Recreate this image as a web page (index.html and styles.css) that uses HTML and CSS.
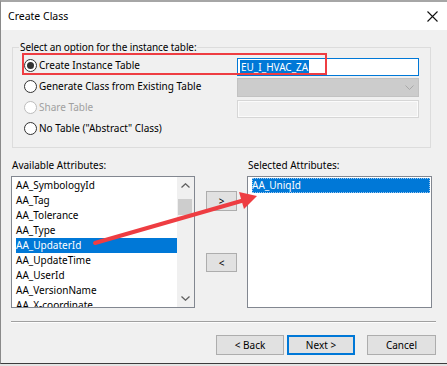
FILE: index.html
```html
<!DOCTYPE html>
<html>
<head>
<meta charset="utf-8">
<link rel="stylesheet" href="styles.css">
</head>
<body>
<div class="window">
  <div class="titlebar">
    <span class="title">Create Class</span>
    <svg class="close" width="11" height="11" viewBox="0 0 11 11"><path d="M0.5 0.5 L10.5 10.5 M10.5 0.5 L0.5 10.5" stroke="#111" stroke-width="1.1" fill="none"/></svg>
  </div>
  <div class="content">
    <fieldset class="group">
      <legend>Select an option for the instance table:</legend>
      <div class="options">
        <label class="opt"><span class="radio checked"></span>Create Instance Table</label>
        <div class="textbox focused"><span class="seltext">EU_I_HVAC_ZA</span></div>
        <label class="opt"><span class="radio"></span>Generate Class from Existing Table</label>
        <div class="combo"><svg width="9" height="5" viewBox="0 0 9 5"><path d="M0.5 0.5 L4.5 4.5 L8.5 0.5" stroke="#a8a8a8" fill="none"/></svg></div>
        <label class="opt disabled"><span class="radio"></span>Share Table</label>
        <div class="textbox disabled"></div>
        <label class="opt"><span class="radio"></span>No Table ("Abstract" Class)</label>
      </div>
    </fieldset>
    <div class="lists">
      <div class="col">
        <div class="lbl">Available Attributes:</div>
        <div class="listbox">
          <div class="items">
            <div class="item">AA_SymbologyId</div>
            <div class="item">AA_Tag</div>
            <div class="item">AA_Tolerance</div>
            <div class="item">AA_Type</div>
            <div class="item selected">AA_UpdaterId</div>
            <div class="item">AA_UpdateTime</div>
            <div class="item">AA_UserId</div>
            <div class="item">AA_VersionName</div>
            <div class="item">AA_X-coordinate</div>
          </div>
          <div class="scrollbar">
            <div class="sb-btn"><svg width="9" height="5" viewBox="0 0 9 5"><path d="M0.5 4.5 L4.5 0.8 L8.5 4.5" stroke="#606060" stroke-width="1.3" fill="none"/></svg></div>
            <div class="sb-track"><div class="sb-thumb"></div></div>
            <div class="sb-btn"><svg width="9" height="5" viewBox="0 0 9 5"><path d="M0.5 0.5 L4.5 4.2 L8.5 0.5" stroke="#606060" stroke-width="1.3" fill="none"/></svg></div>
          </div>
        </div>
      </div>
      <div class="mid">
        <button class="btn small add">&gt;</button>
        <button class="btn small remove">&lt;</button>
      </div>
      <div class="col">
        <div class="lbl">Selected Attributes:</div>
        <div class="listbox plain">
          <div class="items">
            <div class="item selected focus">AA_UniqId</div>
          </div>
        </div>
      </div>
    </div>
    <div class="sep"></div>
    <div class="footer">
      <button class="btn wide back">&lt; Back</button>
      <button class="btn wide default">Next &gt;</button>
      <button class="btn wide cancel">Cancel</button>
    </div>
  </div>
  <div class="callout-box"></div>
  <svg class="callout-arrow" width="447" height="366" viewBox="0 0 447 366">
    <line x1="95" y1="243" x2="243" y2="200.5" stroke="#ee3d42" stroke-width="4" stroke-linecap="round"/>
    <polygon points="257,196 239,192 244,209" fill="#ee3d42"/>
  </svg>
</div>
</body>
</html>
```

FILE: styles.css
```css
* { box-sizing: border-box; }
html, body { margin: 0; padding: 0; background: #e4e4e4; }
body { font-family: "Noto Sans", "Liberation Sans", sans-serif; font-size: 10px; color: #000; }

.window {
  position: relative;
  width: 447px;
  height: 364px;
  border-top: 2px solid #a6a6a6;
  border-left: 1px solid #8a8a8a;
  border-bottom: 1px solid #3c3c3c;
  background: #f0f0f0;
  display: flex;
  flex-direction: column;
  overflow: hidden;
}

.titlebar {
  height: 28px;
  flex: none;
  background: #fff;
  display: flex;
  align-items: center;
  justify-content: space-between;
  padding: 0 9px 0 7px;
}
.title { font-size: 10.5px; line-height: 14px; }
.close { display: block; }

.content {
  flex: 1;
  display: flex;
  flex-direction: column;
  padding: 10px 11px 0 10px;
}

.group {
  margin: 0 0 0 1px;
  width: 419px;
  padding: 0;
  border: 1px solid #dcdcdc;
  min-width: 0;
}
.group legend {
  margin-left: 6px;
  padding: 0 1px;
  line-height: 15px;
  height: 15px;
  letter-spacing: -0.1px;
}
.options {
  display: grid;
  grid-template-columns: 214px 182px;
  grid-auto-rows: 21px;
  padding: 1px 10px 7px 10px;
}
.opt {
  display: flex;
  align-items: center;
  gap: 2px;
  padding-left: 1px;
  margin-bottom: 3px;
  line-height: 14px;
  white-space: nowrap;
}
.opt.disabled { color: #a0a0a0; }
.radio {
  width: 13px;
  height: 13px;
  border: 1px solid #333;
  border-radius: 50%;
  background: #fff;
  display: flex;
  align-items: center;
  justify-content: center;
  flex: none;
}
.radio.checked::after {
  content: "";
  width: 7px;
  height: 7px;
  border-radius: 50%;
  background: #333;
}
.opt.disabled .radio { border-color: #bcbcbc; }

.textbox {
  align-self: center;
  height: 18px;
  border: 1px solid #7a7a7a;
  background: #fff;
  display: flex;
  align-items: center;
  padding-left: 2px;
}
.textbox.focused { border-color: #0078d7; }
.seltext {
  background: #0078d7;
  color: #fff;
  line-height: 14px;
  padding: 0 1px;
}
.textbox.disabled {
  border-color: #d6d6d6;
  background: #f0f0f0;
  box-shadow: inset 0 0 0 1px #fbfbfb;
}
.combo {
  align-self: center;
  height: 19px;
  border: 1px solid #c2c2c2;
  background: #cccccc;
  display: flex;
  align-items: center;
  justify-content: flex-end;
  padding-right: 4px;
}
.combo svg { display: block; }

.lists {
  display: grid;
  grid-template-columns: 184px 31px 184px;
  column-gap: 11px;
  margin-top: 10px;
}
.lists .col:last-child { margin-left: -1px; }
.lbl { line-height: 15px; height: 15px; margin-bottom: 3px; padding-left: 1px; }
.listbox {
  height: 132px;
  border: 1px solid #828790;
  background: #fff;
  display: flex;
  overflow: hidden;
}
.items {
  flex: 1;
  padding: 1px 0 0 4px;
  overflow: hidden;
}
.listbox.plain .items { padding-right: 1px; }
.item { height: 15px; line-height: 15px; white-space: nowrap; }
.item.selected { background: #0078d7; color: #fff; }
.item.focus { outline: 1px dotted #9cc7ee; outline-offset: -1px; }

.scrollbar {
  width: 17px;
  flex: none;
  background: #f0f0f0;
  display: flex;
  flex-direction: column;
}
.sb-btn {
  height: 17px;
  display: flex;
  align-items: center;
  justify-content: center;
}
.sb-btn svg { display: block; }
.sb-track { flex: 1; padding-top: 5px; }
.sb-thumb { height: 16px; margin: 0 2px 0 1px; background: #cdcdcd; }

.mid {
  display: flex;
  flex-direction: column;
  padding-top: 33px;
  gap: 42px;
}
.btn {
  font: inherit;
  margin: 0;
  padding: 0;
  background: #e1e1e1;
  border: 1px solid #adadad;
  color: #000;
  line-height: 16px;
}
.btn.small { width: 31px; height: 20px; font-size: 10px; }
.btn.small.remove { height: 19px; }

.sep {
  height: 2px;
  margin: 13px 0 0 0;
  border-top: 1px solid #a0a0a0;
  border-bottom: 1px solid #fdfdfd;
}

.footer {
  display: flex;
  justify-content: flex-end;
  margin-top: 12px;
}
.btn.wide { width: 68px; height: 20px; flex: none; }
.btn.default { margin-left: 3px; border-color: #0078d7; box-shadow: inset 0 0 0 1px #0078d7; }
.btn.cancel { margin-left: 12px; width: 69px; }

.callout-box {
  position: absolute;
  left: 21px;
  top: 51px;
  width: 305px;
  height: 22px;
  border: 2px solid #ee3d42;
}
.callout-arrow {
  position: absolute;
  left: -1px;
  top: -2px;
  pointer-events: none;
}
```
